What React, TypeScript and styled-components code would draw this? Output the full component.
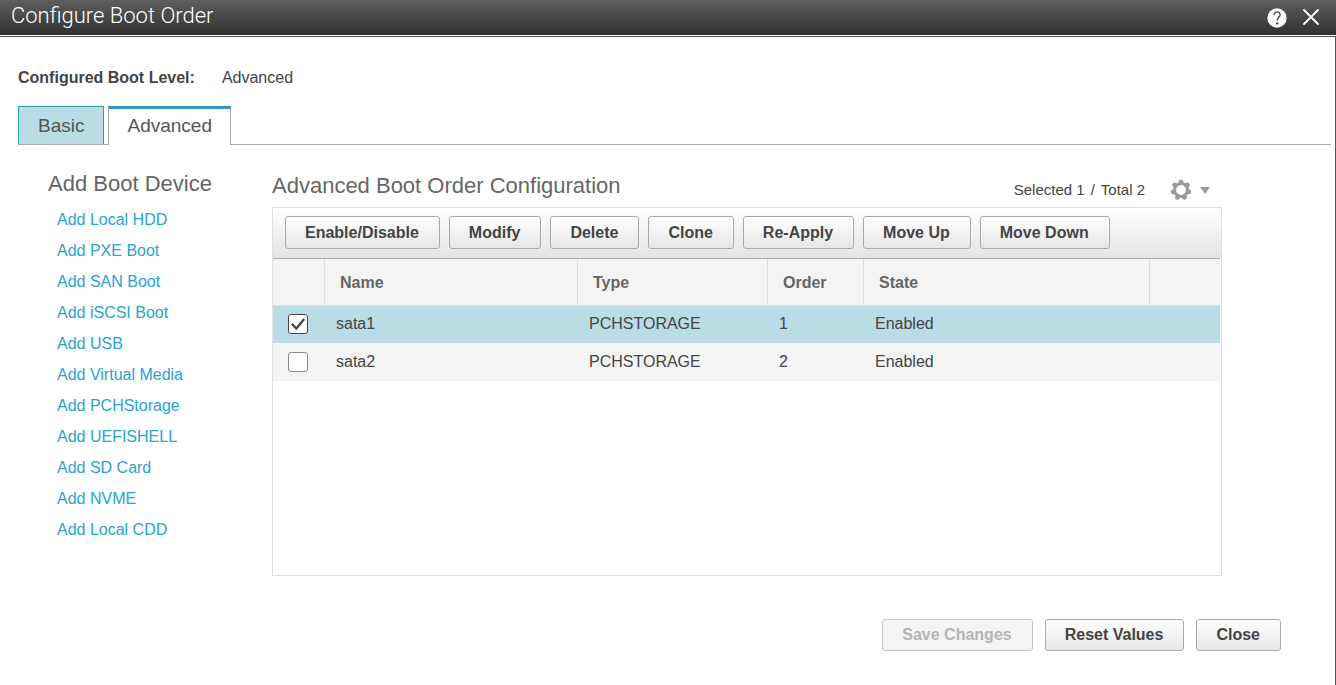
import React, { useState } from "react";
import styled, { createGlobalStyle, css } from "styled-components";

const GlobalStyle = createGlobalStyle`
  *, *::before, *::after { box-sizing: border-box; }
  body {
    margin: 0;
    background: #fff;
    color: #444;
    font: 16px/20px "Liberation Sans", Arial, sans-serif;
  }
  button, input { font: inherit; color: inherit; margin: 0; }
`;

const Dialog = styled.div`
  display: flex;
  flex-direction: column;
  min-height: 100vh;
`;

const TitleBar = styled.header`
  display: flex;
  align-items: flex-start;
  justify-content: space-between;
  height: 35px;
  margin-bottom: 1px;
  padding: 2px 16px 0 11px;
  background: linear-gradient(#5e5e5e, #303030);
  color: #fff;
`;

const Title = styled.h1`
  margin: 0;
  font: 300 22px/28px Roboto, sans-serif;
`;

const TitleActions = styled.div`
  display: flex;
  align-items: flex-start;
  gap: 15px;
  padding-top: 6px;
`;

const IconButton = styled.button`
  display: flex;
  align-items: center;
  gap: 8px;
  padding: 0;
  border: 0;
  background: none;
  cursor: pointer;
`;

const Body = styled.main`
  flex: 1;
  padding: 31px 4px 34px 18px;
  border-top: 1px solid #555;
  border-right: 1px solid #555;
`;

const BootLevel = styled.dl`
  display: flex;
  gap: 27px;
  margin: 0 0 18px;
  dt { font-weight: 700; }
  dd { margin: 0; }
`;

const Tabs = styled.div`
  display: flex;
  gap: 4px;
  border-bottom: 1px solid #aaa;
`;

const Tab = styled.button<{ $active?: boolean }>`
  height: 38px;
  padding: 0 19px;
  font-size: 19px;
  line-height: 24px;
  border: 1px solid #3399bb;
  border-bottom: 0;
  background: #b9dce5;
  color: #555;
  cursor: pointer;
  ${(p) =>
    p.$active &&
    css`
      height: 39px;
      margin-bottom: -1px;
      border-color: #aaa;
      border-top: 3px solid #3399bb;
      background: #fff;
      padding: 0 18px 2px;
    `}
`;

const Columns = styled.div`
  display: flex;
  align-items: flex-start;
  padding: 25px 109px 0 30px;
`;

const SideNav = styled.nav`
  flex: 0 0 224px;
`;

const Heading = styled.h2`
  margin: 0;
  font-size: 22px;
  line-height: 28px;
  font-weight: 400;
  color: #666;
`;

const LinkList = styled.ul`
  list-style: none;
  margin: 6px 0 0;
  padding: 0 0 0 9px;
  line-height: 31px;
`;

const DeviceLink = styled.a`
  color: #29a3d0;
  text-decoration: none;
  &:hover { text-decoration: underline; }
`;

const Content = styled.section`
  flex: 1;
  min-width: 0;
  padding-top: 2px;
`;

const ContentHeader = styled.div`
  display: flex;
  align-items: flex-start;
  justify-content: space-between;
  height: 35px;
`;

const Summary = styled.div`
  display: flex;
  align-items: center;
  gap: 25px;
  padding: 7px 12px 0 0;
  font-size: 15px;
`;

const Counts = styled.span`
  display: flex;
  gap: 6px;
`;

const Panel = styled.div`
  min-height: 369px;
  border: 1px solid #e0e0e0;
`;

const Toolbar = styled.div`
  display: flex;
  flex-wrap: wrap;
  gap: 9px;
  padding: 8px 12px 9px;
  background: linear-gradient(#fff, #e4e4e4);
`;

const Button = styled.button`
  height: 33px;
  padding: 0 20px 0 19px;
  border: 1px solid #aaa;
  border-radius: 3px;
  background: linear-gradient(#fff, #e6e6e6);
  color: #444;
  font-weight: 700;
  white-space: nowrap;
  cursor: pointer;
  &:disabled {
    border-color: #c4c4c4;
    background: #f4f4f4;
    color: #b4b4b4;
    cursor: default;
  }
`;

const Table = styled.table`
  width: calc(100% - 1px);
  table-layout: fixed;
  border-collapse: separate;
  border-spacing: 0;
  border-top: 1px solid #aaa;
  text-align: left;
`;

const Col = styled.col<{ $width?: number }>`
  ${(p) => p.$width && `width: ${p.$width}px;`}
`;

const HeadCell = styled.th`
  height: 46px;
  padding: 2px 0 0 15px;
  color: #666;
  background: linear-gradient(#ddd, #ddd) right top / 1px calc(100% - 1px) no-repeat #f4f4f4;
  &:last-child { background: #f4f4f4; }
`;

const Row = styled.tr<{ $selected: boolean }>`
  background: ${(p) => (p.$selected ? "#b9dce5" : "#f4f4f4")};
`;

const Cell = styled.td`
  height: 38px;
  padding: 0 0 0 11px;
  &:first-child { padding-left: 15px; }
  ${Row}:first-child > & { box-shadow: inset 0 1px #e0e0e0; }
`;

const CheckWrap = styled.span`
  position: relative;
  display: block;
  width: 20px;
  height: 20px;
  svg {
    position: absolute;
    inset: 0;
    pointer-events: none;
  }
`;

const CheckInput = styled.input`
  display: block;
  appearance: none;
  width: 20px;
  height: 20px;
  border: 1px solid #888;
  border-radius: 3px;
  background: #fff;
  &:checked { border-color: #444; }
`;

const Footer = styled.footer`
  display: flex;
  justify-content: flex-end;
  gap: 12px;
  padding: 43px 50px 0 0;
  ${Button} { height: 32px; }
`;

const devices = [
  "Local HDD", "PXE Boot", "SAN Boot", "iSCSI Boot", "USB", "Virtual Media",
  "PCHStorage", "UEFISHELL", "SD Card", "NVME", "Local CDD",
];

const actions = ["Enable/Disable", "Modify", "Delete", "Clone", "Re-Apply", "Move Up", "Move Down"];

const bootOrder = [
  { name: "sata1", type: "PCHSTORAGE", order: 1, state: "Enabled" },
  { name: "sata2", type: "PCHSTORAGE", order: 2, state: "Enabled" },
];

const TEETH = 7;

function GearIcon() {
  return (
    <svg width="22" height="22" viewBox="-11 -11 22 22" fill="#999" aria-hidden="true">
      <circle r="6.3" fill="none" stroke="#999" strokeWidth="2.8" />
      {Array.from({ length: TEETH }, (_, i) => (
        <path key={i} d="M-3.2-6.6L-1.4-10.3H1.4L3.2-6.6Z" transform={`rotate(${(i * 360) / TEETH})`} />
      ))}
    </svg>
  );
}

function HelpIcon() {
  return (
    <svg width="20" height="20" viewBox="0 0 20 20" aria-hidden="true">
      <circle cx="10" cy="10" r="9.7" fill="#fff" />
      <path d="M7.1 7.2C7.1 5 8.4 3.9 10.1 3.9s3 1.1 3 2.8c0 2.5-2.8 2.8-2.8 5.7" fill="none" stroke="#444" strokeWidth="1.3" />
      <circle cx="10.2" cy="15.4" r="1.2" fill="#444" />
    </svg>
  );
}

function CloseIcon() {
  return (
    <svg width="18" height="18" viewBox="0 0 18 18" aria-hidden="true">
      <path d="M2 2L16 16M16 2L2 16" stroke="#fff" strokeWidth="1.8" strokeLinecap="round" />
    </svg>
  );
}

export default function App() {
  const [selected, setSelected] = useState<string[]>(["sata1"]);
  const toggle = (name: string) =>
    setSelected((s) => (s.includes(name) ? s.filter((n) => n !== name) : [...s, name]));

  return (
    <Dialog>
      <GlobalStyle />
      <TitleBar>
        <Title>Configure Boot Order</Title>
        <TitleActions>
          <IconButton aria-label="Help"><HelpIcon /></IconButton>
          <IconButton aria-label="Close dialog"><CloseIcon /></IconButton>
        </TitleActions>
      </TitleBar>
      <Body>
        <BootLevel>
          <dt>Configured Boot Level:</dt>
          <dd>Advanced</dd>
        </BootLevel>
        <Tabs role="tablist">
          <Tab role="tab" aria-selected={false}>Basic</Tab>
          <Tab role="tab" aria-selected $active>Advanced</Tab>
        </Tabs>
        <Columns>
          <SideNav>
            <Heading>Add Boot Device</Heading>
            <LinkList>
              {devices.map((d) => (
                <li key={d}><DeviceLink href="#">{`Add ${d}`}</DeviceLink></li>
              ))}
            </LinkList>
          </SideNav>
          <Content>
            <ContentHeader>
              <Heading>Advanced Boot Order Configuration</Heading>
              <Summary>
                <Counts>
                  <span>{`Selected ${selected.length}`}</span>
                  <span>/</span>
                  <span>{`Total ${bootOrder.length}`}</span>
                </Counts>
                <IconButton aria-label="Table settings">
                  <GearIcon />
                  <svg width="10" height="7" viewBox="0 0 10 7" aria-hidden="true"><path d="M0 0H10L5 7Z" fill="#999" /></svg>
                </IconButton>
              </Summary>
            </ContentHeader>
            <Panel>
              <Toolbar>
                {actions.map((a) => <Button key={a}>{a}</Button>)}
              </Toolbar>
              <Table>
                <colgroup>
                  <Col $width={52} />
                  <Col $width={253} />
                  <Col $width={190} />
                  <Col $width={96} />
                  <Col $width={286} />
                  <Col />
                </colgroup>
                <thead>
                  <tr>
                    <HeadCell />
                    <HeadCell>Name</HeadCell>
                    <HeadCell>Type</HeadCell>
                    <HeadCell>Order</HeadCell>
                    <HeadCell>State</HeadCell>
                    <HeadCell />
                  </tr>
                </thead>
                <tbody>
                  {bootOrder.map((b) => {
                    const on = selected.includes(b.name);
                    return (
                      <Row key={b.name} $selected={on}>
                        <Cell>
                          <CheckWrap>
                            <CheckInput type="checkbox" aria-label={`Select ${b.name}`} checked={on} onChange={() => toggle(b.name)} />
                            {on && (
                              <svg width="20" height="20" viewBox="0 0 20 20" aria-hidden="true">
                                <path d="M3.8 9.8L8.3 14.5L16.2 5" fill="none" stroke="#444" strokeWidth="2.2" />
                              </svg>
                            )}
                          </CheckWrap>
                        </Cell>
                        <Cell>{b.name}</Cell>
                        <Cell>{b.type}</Cell>
                        <Cell>{b.order}</Cell>
                        <Cell>{b.state}</Cell>
                        <Cell />
                      </Row>
                    );
                  })}
                </tbody>
              </Table>
            </Panel>
          </Content>
        </Columns>
        <Footer>
          <Button disabled>Save Changes</Button>
          <Button>Reset Values</Button>
          <Button>Close</Button>
        </Footer>
      </Body>
    </Dialog>
  );
}
